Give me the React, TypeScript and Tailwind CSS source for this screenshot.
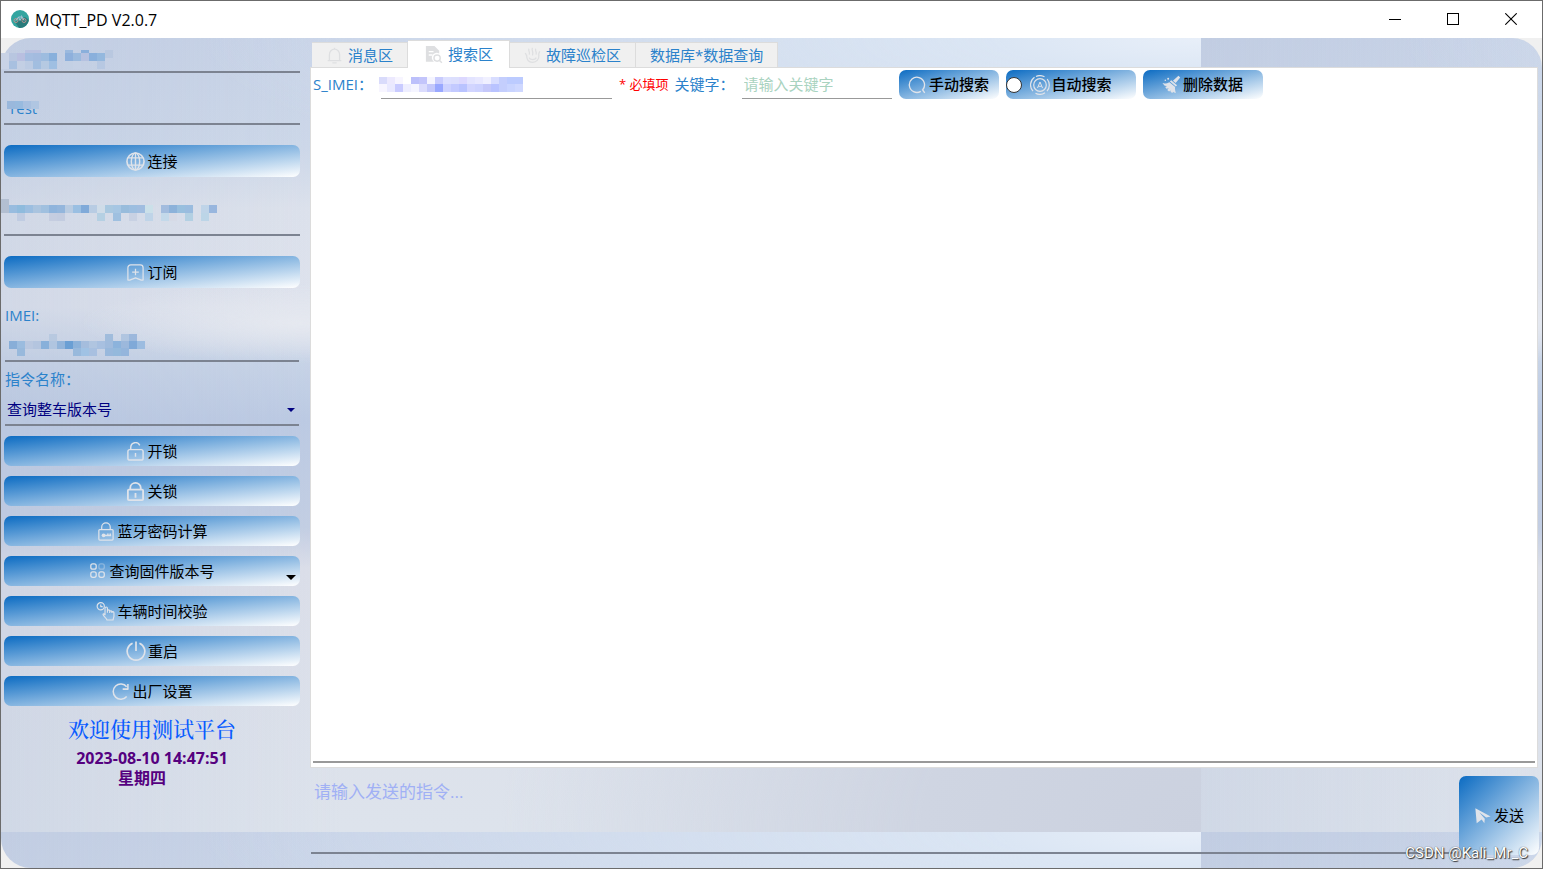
import React, { useState } from 'react'

type Cell = [number, number, string]

const BUTTON =
  'relative flex items-center justify-center gap-[2px] rounded-[7px] bg-linear-to-br/srgb from-[#0b6bc2] to-white text-black'

/* Colour blocks that hide private values */
function Mask({ cells, size = 8 }: { cells: Cell[]; size?: number }) {
  return (
    <svg className="pointer-events-none absolute inset-0 h-full w-full overflow-visible" aria-hidden="true" shapeRendering="crispEdges">
      {cells.map(([x, y, fill]) => (
        <rect key={`${x}-${y}`} x={x} y={y} width={size} height={size} fill={fill} />
      ))}
    </svg>
  )
}

function row(x: number, y: number, colors: string): Cell[] {
  return colors
    .split(' ')
    .map((c, i): Cell => [x + i * 8, y, `#${c}`])
    .filter((cell) => cell[2] !== '#-')
}

const hostMask: Cell[] = [
  ...row(21, 12, 'b9c1e0 b9c1e0 - - - 9bb9de - 8aafdb - - b9c8e0'),
  ...row(-3, 15, 'c9d3e6 b8c6e0 b9bfe0 a5bde0 a3bbdf 9dbcdf 88b0dc - 8eb0dc 9bbade b5c1e0 8ab0dc 94b8de'),
  ...row(-3, 23, 'c9d3e6 a8c0e0 c3cfe4 bccbe3 a2bee0 b5c9e2 9fbfe2 - c3d0e4 c5d1e5 - - b7c8e2'),
]
const userMask: Cell[] = row(3, 8, '9ab8dc 98bade a8c0e0 b0c6e2')
const topicMask: Cell[] = [
  ...row(-3, 2, 'b3bfd1'),
  ...row(-3, 8, 'b3bfd1 98bcdf 8fbbdd 9cbee0 aac4df a0c0df 8fb4dc 94b6dc b8cbe1 9abfe2 80aad9 b8cce3 cfdce8 a9c8e0 a6c6e3 98bcdc 9cbee0 a0bde0 cbe0e9 - a2bcde 8cb2da 98bfde 9abcdf - bfd4e8 98b6de'),
  ...row(13, 16, 'c0cce2 - - - c5cde0 c3cce0 - - - - b5d0e3 - 9fc0e0 - c8d1e3 - bfd4e8 - c3d9ea d6dae6 - b3d0e3 - bcd5e7'),
]
const imeiMask: Cell[] = [
  ...row(44, 8, 'b8c9e0 - - - - - - a0bcdc - b0c5e0 9cb8dc'),
  ...row(4, 15, '88aed8 9bbcdf bac8e0 b4c5df 88b0da b0c5e0 92b4da 6a9fd4 8cb2da a5bddd b0c5e0 a8c0e0 a0bbdd 8cb3dc 9cb8dc 80a9d8 9cbce0'),
  ...row(12, 22, '98b9dc - - - - - - 98b9dc a0c2e4 a8c0e0 - 98b8dc 94b9dc 94b5dc'),
]
const searchMask: Cell[] = [
  ...row(-2, 6, 'd9dbfb ece9fe f7f5ff - bcc0fb c3c5fb f5f5ff c9ccfd dde0ff dcdffd dcd8ff e3e4ff e8e8ff f0f0ff d8ddff c4cefd bccbff bccbff'),
  ...row(-2, 13, 'f7f5ff e9e9ff c9cbff eeeeff f5f5ff dbdcfd c4c8fb 99a8ff cdd2ff c3caff b9c3ff d2d5ff cdd2ff c5c8fa b9c3ff c4cefd c9d4ff cfd8ff'),
]

function Icon({ children, size = 20, className = 'text-[#dfe3ea]' }: { children: React.ReactNode; size?: number; className?: string }) {
  return (
    <svg width={size} height={size} viewBox="0 0 20 20" fill="none" stroke="currentColor" strokeWidth="1.5" strokeLinejoin="round" className={`shrink-0 ${className}`} aria-hidden="true">
      {children}
    </svg>
  )
}

const GlobeIcon = () => (
  <Icon size={19}>
    <circle cx="10" cy="10" r="9" strokeWidth="1.7" />
    <ellipse cx="10" cy="10" rx="4.4" ry="9" />
    <path d="M10 1v18M2.3 6.200h15.400M2.300 13.800h15.400" />
  </Icon>
)
const SubscribeIcon = () => (
  <Icon size={19}>
    <path d="M5 2h10a3 3 0 0 1 3 3v13h-2l-6-2.400L4 18H2V5a3 3 0 0 1 3-3zM10 6v7M6.500 9.500h7" strokeWidth="1.3" />
  </Icon>
)
const UnlockIcon = () => (
  <Icon size={19}>
    <rect x="2" y="8" width="16" height="11" rx="2" />
    <path d="M5 8V5.500a5 5 0 0 1 9.500-2M10 11.500v4" />
  </Icon>
)
const LockIcon = () => (
  <Icon size={19}>
    <rect x="2" y="8" width="16" height="11" rx="1" strokeWidth="1.9" />
    <path d="M4.500 8V6a5.500 5 0 0 1 11 0v2M10 11.500v5" strokeWidth="1.9" />
  </Icon>
)
const KeyLockIcon = () => (
  <Icon size={19}>
    <rect x="3" y="8" width="15" height="11" rx="1" strokeWidth="1.3" />
    <path d="M6 8V5.500a4.500 4.500 0 0 1 9 0V8" strokeWidth="1.3" />
    <circle cx="8" cy="14" r="2" fill="currentColor" stroke="none" />
    <path d="M9 14.200h7M12.500 14v-1.800M15 14v-1.800" />
  </Icon>
)
const GridIcon = () => (
  <Icon size={18}>
    <g strokeWidth="1.4">
      <rect x="2" y="2" width="6" height="6" rx="2.200" />
      <rect x="11" y="2" width="6" height="6" rx="2.200" strokeOpacity=".4" />
      <rect x="2" y="11" width="6" height="6" rx="2.200" />
      <rect x="11" y="11" width="6" height="6" rx="2.200" />
    </g>
  </Icon>
)
const ClockHandIcon = () => (
  <Icon size={19}>
    <g strokeWidth="1.2">
      <circle cx="5" cy="4.500" r="3.800" />
      <path d="M5 2.500v2.300h2" />
      <path d="M9.500 14V6.500a1.200 1.200 0 0 1 2.500 0v4.800M12 9.500a1.200 1.200 0 0 1 2.400 0v2M14.400 10.200a1.200 1.200 0 0 1 2.300 0v1.500M16.700 11.200a1.100 1.100 0 0 1 2.200 0V15c0 1.500-.9 2-.9 4h-6.500c0-1.500-3.500-4-4-5.500-.3-1.200 1-1.500 2 .1" />
    </g>
  </Icon>
)
const PowerIcon = () => (
  <Icon>
    <path d="M6.600 2.200a8.800 8.800 0 1 0 6.800 0M10 .5v9.500" strokeWidth="1.7" />
  </Icon>
)
const ResetIcon = () => (
  <Icon size={19}>
    <path d="M16.500 15.200A8 8 0 1 1 16.500 5M17.800 2v5.500h-5.500" strokeWidth="1.6" />
  </Icon>
)
const SearchIcon = () => (
  <Icon size={19}>
    <path d="M15.500 15.500A8 8 0 1 0 13.500 17.200M15 15l2.600 3.800" strokeWidth="1.4" />
  </Icon>
)
const AutoIcon = () => (
  <Icon size={20}>
    <g strokeWidth="1.2">
      <circle cx="10" cy="10" r="6.300" />
      <path d="M7.500 13L10 7l2.500 6M8.400 11.300h3.200" strokeWidth="1" />
      <path d="M4.500 2.300A9.300 9.300 0 0 0 3 16.200M5.500 18.200a9.300 9.300 0 0 0 9.500-.4M17 16.200a9.300 9.300 0 0 0 .2-12M14.500 1.800a9.300 9.300 0 0 0-8.500-.3" />
    </g>
  </Icon>
)
const BroomIcon = () => (
  <Icon size={19}>
    <g fill="currentColor" stroke="none">
      <path d="M17.300.8l1.900 1.700-4.800 6-2.900-2.500zM9.700 5.500l6.200 5.300-1.300 1.400-6.300-5.300zM7.800 7.600l6 5.100c-.4 2.200.2 4.200.8 6.300-1.400-.2-2.200-.6-3-1.300l-.5 1.300-2.100-1 .3-1.800-1.900 1.200-1.900-1.700 1.600-1.700-2.500.6-1.200-2 2-1-2.500-.2L.5 8.800c2.900.4 5.200.1 7.300-1.200z" />
      <circle cx="6.500" cy="4" r="1" />
      <circle cx="3.500" cy="5.500" r=".8" />
    </g>
  </Icon>
)
const PlaneIcon = () => (
  <Icon size={18}>
    <path d="M1.500 1.500L18.500 10.500l-5 1.200L6 6l6 7-.5 5-3-4L3 18z" fill="currentColor" stroke="none" />
  </Icon>
)

const TAB_ICON = 'text-[#dedfe1]'
const BellIcon = () => (
  <Icon size={17} className={TAB_ICON}>
    <path d="M2 16h16M4 16V9a6 6.500 0 0 1 12 0v7M10 2.500V.8M7.500 18.800h5" />
  </Icon>
)
const FileSearchIcon = () => (
  <Icon size={19} className={TAB_ICON}>
    <path d="M2 1h9l5 5v3a5 5 0 0 0-5.500 8.500H2z" fill="currentColor" stroke="none" />
    <path d="M5 7h5M5 10.500h4" stroke="#fff" />
    <circle cx="13.800" cy="13.800" r="3.300" />
    <path d="M16.300 16.300l2.500 2.500" />
  </Icon>
)
const InspectIcon = () => (
  <Icon size={17} className={TAB_ICON}>
    <path d="M3 9c0 6 2.500 9 7 9s8-3 7.500-9M6 12.500c1 3 7 3 8.500 0M6 2c-2 2 2 4 0 7M10 1c-2 2.500 2 5 0 9M14 2c-2 2 2 4 0 7M1.500 7l2 4M18.500 5l-1.500 4" />
  </Icon>
)

const tabs = [
  { name: '消息区', icon: <BellIcon />, pad: 'px-[14px]' },
  { name: '搜索区', icon: <FileSearchIcon />, pad: 'px-4' },
  { name: '故障巡检区', icon: <InspectIcon />, pad: 'px-[14px]' },
  { name: '数据库*数据查询', icon: null, pad: 'px-[14px]' },
]

const actions = [
  { name: '开锁', icon: <UnlockIcon /> },
  { name: '关锁', icon: <LockIcon /> },
  { name: '蓝牙密码计算', icon: <KeyLockIcon /> },
  { name: '查询固件版本号', icon: <GridIcon />, menu: true },
  { name: '车辆时间校验', icon: <ClockHandIcon /> },
  { name: '重启', icon: <PowerIcon /> },
  { name: '出厂设置', icon: <ResetIcon /> },
]

function TitleBar() {
  return (
    <header className="flex h-[37px] shrink-0 items-center bg-white pr-[2px] pl-[10px]">
      <svg width="18" height="18" viewBox="0 0 18 18" fill="none" className="mb-[2px]" aria-hidden="true">
        <circle cx="9" cy="9" r="9" fill="#33a5a0" />
        <path d="M4 12l4 5.900A9 9 0 0 0 17.900 10L14 7z" fill="#287b7b" />
        <g stroke="#b5938f" strokeWidth="1">
          <circle cx="5" cy="10.500" r="2" />
          <circle cx="13" cy="10.500" r="2" />
        </g>
        <path d="M5 10.500L7.500 7h3.500l2 3.500M7.500 7L9 10.500 11 7M10.500 5.500l.5 1.500" stroke="#a9c3d6" strokeWidth="1" />
      </svg>
      <h1 className="ml-[6px] flex-1 text-[16px] text-black">MQTT_PD V2.0.7</h1>
      <div className="flex h-full text-black">
        <button type="button" aria-label="最小化" className="flex w-[58px] items-center justify-center pb-[2px]">
          <svg width="12" height="12" shapeRendering="crispEdges"><path d="M0 6.500h12" stroke="currentColor" /></svg>
        </button>
        <button type="button" aria-label="最大化" className="flex w-[58px] items-center justify-center pb-[2px]">
          <svg width="12" height="12" fill="none" shapeRendering="crispEdges"><rect x=".5" y=".5" width="11" height="11" stroke="currentColor" /></svg>
        </button>
        <button type="button" aria-label="关闭" className="flex w-[58px] items-center justify-center pb-[2px]">
          <svg width="12" height="12" fill="none"><path d="M.3.3l11.400 11.400M11.700.3L.3 11.700" stroke="currentColor" strokeWidth="1.1" /></svg>
        </button>
      </div>
    </header>
  )
}

function Sidebar() {
  const line = 'block w-full border-b-2 border-[#7c8391] bg-transparent px-1 text-[#2b82cb] outline-none'
  return (
    <aside className="flex w-[299px] shrink-0 flex-col pl-[3px]">
      <div className="relative">
        <input aria-label="服务器" className={`${line} h-[35px]`} />
        <Mask cells={hostMask} />
      </div>
      <div className="relative mt-5">
        <input aria-label="用户" defaultValue="Test" className={`${line} h-8`} />
        <Mask cells={userMask} />
      </div>
      <button type="button" className={`${BUTTON} mt-5 h-8 shrink-0`}><GlobeIcon />连接</button>
      <div className="relative mt-5">
        <input aria-label="主题" className={`${line} h-[39px]`} />
        <Mask cells={topicMask} />
      </div>
      <button type="button" className={`${BUTTON} mt-5 h-8 shrink-0`}><SubscribeIcon />订阅</button>

      <div className="mt-4 px-px">
        <label htmlFor="imei" className="block h-[22px] leading-[22px] text-[#2b82cb]">IMEI:</label>
        <div className="relative">
          <input id="imei" className={`${line} h-9`} />
          <Mask cells={imeiMask} />
        </div>
        <label htmlFor="command" className="mt-[6px] block h-[22px] leading-[22px] text-[#2b82cb]">指令名称：</label>
        <div className="relative mt-1">
          <select id="command" className="block h-8 w-full appearance-none border-b-2 border-[#7c8391] bg-transparent pl-[2px] text-[#000080] outline-none">
            <option>查询整车版本号</option>
          </select>
          <svg width="8" height="4" className="pointer-events-none absolute top-[14px] right-[4px]" aria-hidden="true"><path d="M0 0h8L4 4z" fill="#000080" /></svg>
        </div>
      </div>

      <div className="mt-[10px] flex flex-col gap-[10px]">
        {actions.map((a) => (
          <button key={a.name} type="button" className={`${BUTTON} h-[30px]`}>
            {a.icon}
            {a.name}
            {a.menu && <svg width="10" height="5" className="absolute right-[4px] bottom-[6px]" aria-hidden="true"><path d="M0 0h10L5 5z" fill="#000" /></svg>}
          </button>
        ))}
      </div>

      <div className="mt-3 text-center">
        <h2 className="font-['Liberation_Serif','Noto_Serif_CJK_SC','Noto_Sans_CJK_SC',serif] text-[21px] leading-6 font-medium text-[#0a5cff]">欢迎使用测试平台</h2>
        <p className="mt-[6px] text-[16px] leading-5 font-bold text-[#55007f]">2023-08-10 14:47:51</p>
        <p className="pr-5 text-[16px] leading-5 font-bold text-[#55007f]">星期四</p>
      </div>
    </aside>
  )
}

function SearchPanel() {
  const field = 'block h-7 w-full border-b border-[#999] bg-transparent px-[2px] text-[#2b82cb] outline-none placeholder:text-[#a9d3c0]'
  return (
    <section className="flex min-h-0 flex-1 flex-col border border-[#dcdcdc] bg-white px-[2px] pt-[2px] pb-1">
      <div className="flex h-[29px] items-center text-[#2b82cb]">
        <label htmlFor="s-imei" className="w-[68px]">S_IMEI：</label>
        <div className="relative w-[231px]">
          <input id="s-imei" className={field} />
          <Mask cells={searchMask} />
        </div>
        <span className="ml-[7px] text-[13px] text-[#f00]">* 必填项</span>
        <label htmlFor="keyword" className="ml-[6px] w-[67px]">关键字：</label>
        <div className="w-[150px]">
          <input id="keyword" placeholder="请输入关键字" className={field} />
        </div>
        <div className="ml-[7px] flex h-full gap-[7px] font-medium">
          <button type="button" className={`${BUTTON} w-[100px]`}><SearchIcon />手动搜索</button>
          <label className={`${BUTTON} w-[130px]`}>
            <input type="radio" name="auto" className="absolute left-0 h-4 w-4 appearance-none rounded-full border border-[#333] bg-white" />
            <AutoIcon />自动搜索
          </label>
          <button type="button" className={`${BUTTON} w-[120px]`}><BroomIcon />删除数据</button>
        </div>
      </div>
      <textarea readOnly aria-label="搜索结果" className="min-h-0 w-full flex-1 resize-none border-b-2 border-[#999] outline-none" />
    </section>
  )
}

export default function App() {
  const [active, setActive] = useState('搜索区')

  return (
    <div className="relative flex h-screen min-h-[840px] flex-col overflow-hidden border border-[#6b6b6b] bg-[#f0f0f0] font-['Open_Sans','Noto_Sans_CJK_SC',sans-serif] text-[15px]">
      <TitleBar />

      <div className="flex min-h-0 flex-1 gap-[10px] rounded-[30px] bg-[radial-gradient(ellipse_1000px_180px_at_1200px_0,#e8eff9,#dbe6f4_20%,transparent),radial-gradient(ellipse_700px_500px_at_1200px_794px,#cbd1df,#cfd5e2_40%,transparent),radial-gradient(ellipse_220px_40px_at_300px_285px,#e6e9f0,transparent),linear-gradient(90deg,#b4c1d950,transparent_340px),linear-gradient(180deg,#c8d3e7,#cdd8e9_110px,#dde2ec_170px,#dfe3ed_270px,#c8d4e7_320px,#bccae3_380px,#c3cee3_490px,#dcdfe9_530px,#dde3ec_100%)] bg-size-[1200px_794px]">
        <Sidebar />

        <main className="flex min-w-0 flex-1 flex-col">
          <div className="mr-1 flex min-h-0 flex-1 flex-col">
            <div role="tablist" className="flex h-[29px] shrink-0 items-end pl-[2px]">
              {tabs.map((tab) => (
                <button
                  key={tab.name}
                  type="button"
                  role="tab"
                  aria-selected={active === tab.name}
                  onClick={() => setActive(tab.name)}
                  className={`flex items-center gap-[5px] border-t border-r border-[#dcdcdc] text-[#2b82cb] ${tab.pad} ${
                    active === tab.name ? 'z-10 -mb-px h-7 bg-white pb-px' : 'h-[25px] bg-[#f0f0f0]'
                  }`}
                >
                  {tab.icon}
                  {tab.name}
                </button>
              ))}
            </div>
            <SearchPanel />
          </div>

          <div className="flex h-[100px] shrink-0 gap-[6px] pt-2 pr-[3px] pb-[13px] pl-px">
            <textarea
              aria-label="指令"
              placeholder="请输入发送的指令..."
              className="mb-px min-w-0 flex-1 resize-none border-b-2 border-[#7c8391] bg-transparent px-[3px] pt-1 text-[17px] leading-6 outline-none placeholder:text-[#a0b0f5]"
            />
            <button type="button" className={`${BUTTON} w-20`}><PlaneIcon />发送</button>
          </div>
        </main>
      </div>

      <p className="pointer-events-none absolute right-[14px] bottom-[5px] font-['Roboto',sans-serif] text-[15px] leading-5 text-white [text-shadow:1px_1px_1px_#333,0_0_1px_#333]">CSDN @Kali_Mr_C</p>
    </div>
  )
}
